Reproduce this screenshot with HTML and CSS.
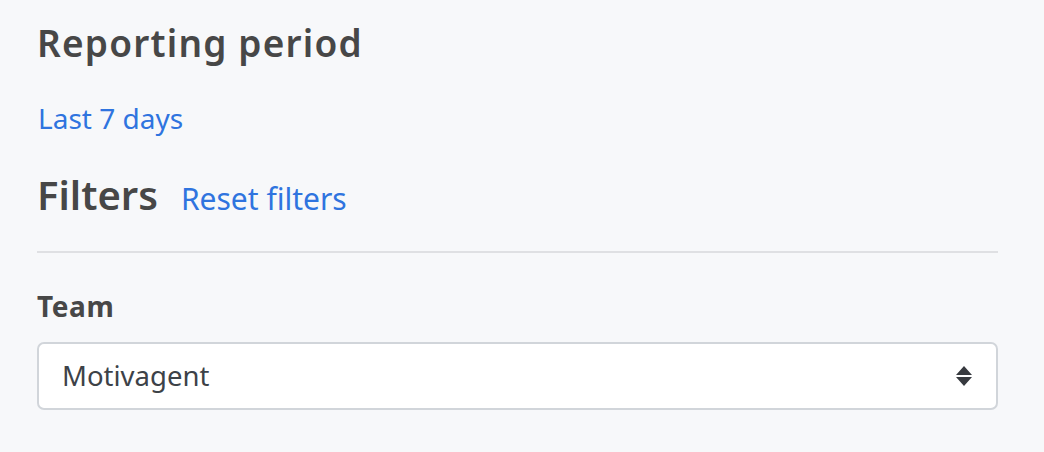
FILE: index.html
```html
<!DOCTYPE html>
<html>
<head>
<meta charset="utf-8">
<link rel="stylesheet" href="styles.css">
</head>
<body>
<div class="panel">
  <h2 class="title">Reporting period</h2>
  <a class="link period" href="#">Last 7 days</a>
  <div class="filters-head">
    <h2 class="title filters">Filters</h2>
    <a class="link reset" href="#">Reset filters</a>
  </div>
  <hr class="divider">
  <label class="label">Team</label>
  <div class="select">
    <span class="select-value">Motivagent</span>
    <svg class="arrows" width="16" height="20" viewBox="0 0 16 20"><path d="M8 0 L16 9 H0 Z M8 20 L16 11 H0 Z" fill="#373a3f"/></svg>
  </div>
</div>
</body>
</html>
```
FILE: styles.css
```css
html, body {
  margin: 0;
  padding: 0;
  background: #f7f8fa;
}
body {
  font-family: "Noto Sans", "Open Sans", "Liberation Sans", sans-serif;
  color: #474747;
}
.panel {
  width: 961px;
  padding: 24px 0 0 37px;
  display: flex;
  flex-direction: column;
  align-items: flex-start;
}
.title {
  margin: 0;
  font-size: 37px;
  font-weight: 600;
  line-height: 37px;
  letter-spacing: 1.2px;
  color: #474747;
}
.link {
  color: #2f74df;
  text-decoration: none;
}
.period {
  margin-top: 43px;
  font-size: 28px;
  line-height: 28px;
  padding-left: 1px;
}
.filters-head {
  margin-top: 43px;
  display: flex;
  align-items: baseline;
  gap: 23px;
}
.filters {
  font-size: 40px;
  line-height: 40px;
  letter-spacing: 0;
}
.reset {
  font-size: 30px;
  line-height: 30px;
}
.divider {
  border: 0;
  border-top: 2px solid #dfe0e3;
  margin: 36px 0 0 0;
  width: 100%;
  height: 0;
}
.label {
  margin-top: 39px;
  font-size: 28px;
  font-weight: 700;
  line-height: 28px;
  letter-spacing: 0.6px;
}
.select {
  box-sizing: border-box;
  margin-top: 22px;
  width: 100%;
  height: 68px;
  background: #fff;
  border: 2px solid #d1d5da;
  border-radius: 7px;
  display: flex;
  align-items: center;
  justify-content: space-between;
  padding: 0 24px 0 23px;
}
.select-value {
  font-size: 27.5px;
  line-height: 28px;
  color: #3d4248;
}
.arrows {
  display: block;
}
```
